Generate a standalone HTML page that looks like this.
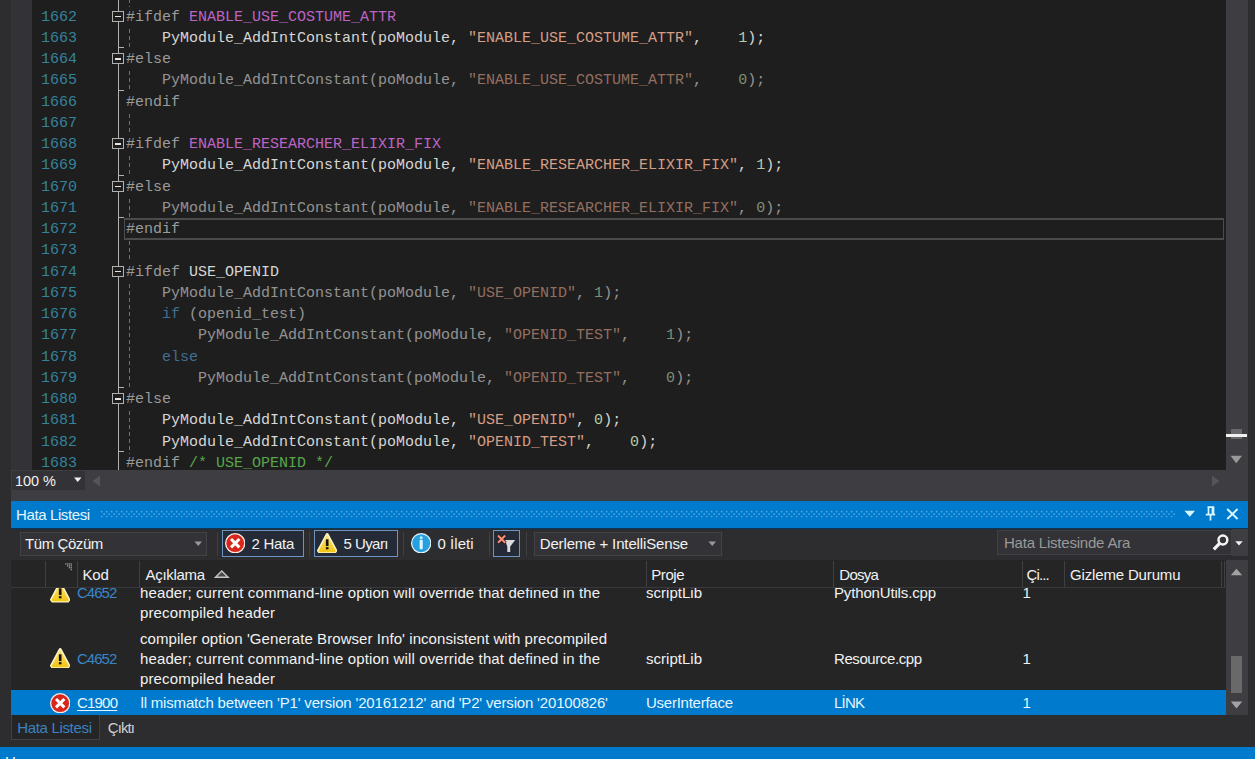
<!DOCTYPE html>
<html><head><meta charset="utf-8"><title>VS</title>
<style>
html,body{margin:0;padding:0;}
body{width:1255px;height:759px;overflow:hidden;background:#2d2d30;position:relative;font-family:"Liberation Sans",sans-serif;}
div,i,span{box-sizing:border-box;}
.a{position:absolute;}
.t{position:absolute;white-space:pre;font-family:"Liberation Sans",sans-serif;}
#editor{left:32px;top:0;width:1194px;height:470px;background:#1e1e1e;}
#margin{left:11px;top:0;width:21px;height:470px;background:#333337;}
.ln,.cl{position:absolute;font-family:"Liberation Mono",monospace;font-size:15px;line-height:21.25px;height:21.25px;white-space:pre;}
.ln{left:41px;color:#34839c;}
.cl{color:#d6d6d6;}
.pp{color:#9b9b9b;}.mac{color:#bd63c5;}.str{color:#d69d85;}.num{color:#b5cea8;}.kw{color:#569cd6;}.cm{color:#57a64a;}
.dim{opacity:.63;}
.box{position:absolute;left:112px;width:11.5px;height:11px;border:1px solid #b0b0b0;background:#1e1e1e;}
.box i{position:absolute;left:1.7px;top:3.7px;width:6px;height:1.5px;background:#e4e4e4;}
.vl{position:absolute;width:1.3px;background:#b2b2b2;}
.hk{position:absolute;left:118px;height:1.2px;width:5.7px;background:#b2b2b2;}
.dl{position:absolute;left:129px;width:1px;background:repeating-linear-gradient(to bottom,#707070 0,#707070 4.25px,transparent 4.25px,transparent 7.0833px);}
</style></head><body>

<div class="a" id="margin"></div>
<div class="a" id="editor"></div>
<div class="vl" style="left:118px;top:0;height:470px"></div>
<div class="ln" style="top:-14.675px">1661</div>
<div class="dl" style="top:-14.675px;height:21.25px"></div>
<div class="a" style="left:123.9px;top:218.17px;width:1100.4px;height:21.6px;border:solid #4b4b4b;border-width:2.4px 1.8px;background:#1e1e1e"></div>
<div class="ln" style="top:6.575px">1662</div>
<div class="box" style="top:10.88px"><i></i></div>
<div class="cl" style="left:126px;top:6.575px"><span class="pp">#ifdef </span><span class="mac">ENABLE_USE_COSTUME_ATTR</span></div>
<div class="ln" style="top:27.825px">1663</div>
<div class="dl" style="top:28.725px;height:21.25px"></div>
<div class="hk" style="top:47.12px"></div>
<div class="cl" style="left:162px;top:27.825px"><span class="id">PyModule_AddIntConstant(poModule, </span><span class="str">&quot;ENABLE_USE_COSTUME_ATTR&quot;</span><span class="id">,    </span><span class="num">1</span><span class="id">);</span></div>
<div class="ln" style="top:49.075px">1664</div>
<div class="box" style="top:53.38px"><i></i></div>
<div class="cl" style="left:126px;top:49.075px"><span class="pp">#else</span></div>
<div class="ln" style="top:70.325px">1665</div>
<div class="dl" style="top:71.225px;height:21.25px"></div>
<div class="hk" style="top:89.62px"></div>
<div class="cl dim" style="left:162px;top:70.325px"><span class="id">PyModule_AddIntConstant(poModule, </span><span class="str">&quot;ENABLE_USE_COSTUME_ATTR&quot;</span><span class="id">,    </span><span class="num">0</span><span class="id">);</span></div>
<div class="ln" style="top:91.575px">1666</div>
<div class="cl" style="left:126px;top:91.575px"><span class="pp">#endif</span></div>
<div class="ln" style="top:112.825px">1667</div>
<div class="dl" style="top:113.725px;height:21.25px"></div>
<div class="ln" style="top:134.075px">1668</div>
<div class="box" style="top:138.38px"><i></i></div>
<div class="cl" style="left:126px;top:134.075px"><span class="pp">#ifdef </span><span class="mac">ENABLE_RESEARCHER_ELIXIR_FIX</span></div>
<div class="ln" style="top:155.325px">1669</div>
<div class="dl" style="top:156.225px;height:21.25px"></div>
<div class="hk" style="top:174.62px"></div>
<div class="cl" style="left:162px;top:155.325px"><span class="id">PyModule_AddIntConstant(poModule, </span><span class="str">&quot;ENABLE_RESEARCHER_ELIXIR_FIX&quot;</span><span class="id">, </span><span class="num">1</span><span class="id">);</span></div>
<div class="ln" style="top:176.575px">1670</div>
<div class="box" style="top:180.88px"><i></i></div>
<div class="cl" style="left:126px;top:176.575px"><span class="pp">#else</span></div>
<div class="ln" style="top:197.825px">1671</div>
<div class="dl" style="top:198.725px;height:21.25px"></div>
<div class="hk" style="top:217.12px"></div>
<div class="cl dim" style="left:162px;top:197.825px"><span class="id">PyModule_AddIntConstant(poModule, </span><span class="str">&quot;ENABLE_RESEARCHER_ELIXIR_FIX&quot;</span><span class="id">, </span><span class="num">0</span><span class="id">);</span></div>
<div class="ln" style="top:219.075px">1672</div>
<div class="cl" style="left:126px;top:219.075px"><span class="pp">#endif</span></div>
<div class="ln" style="top:240.325px">1673</div>
<div class="dl" style="top:241.225px;height:21.25px"></div>
<div class="ln" style="top:261.575px">1674</div>
<div class="box" style="top:265.88px"><i></i></div>
<div class="cl" style="left:126px;top:261.575px"><span class="pp">#ifdef </span><span class="id">USE_OPENID</span></div>
<div class="ln" style="top:282.825px">1675</div>
<div class="dl" style="top:283.725px;height:21.25px"></div>
<div class="cl dim" style="left:162px;top:282.825px"><span class="id">PyModule_AddIntConstant(poModule, </span><span class="str">&quot;USE_OPENID&quot;</span><span class="id">, </span><span class="num">1</span><span class="id">);</span></div>
<div class="ln" style="top:304.075px">1676</div>
<div class="dl" style="top:304.975px;height:21.25px"></div>
<div class="cl dim" style="left:162px;top:304.075px"><span class="kw">if</span><span class="id"> (openid_test)</span></div>
<div class="ln" style="top:325.325px">1677</div>
<div class="dl" style="top:326.225px;height:21.25px"></div>
<div class="cl dim" style="left:198px;top:325.325px"><span class="id">PyModule_AddIntConstant(poModule, </span><span class="str">&quot;OPENID_TEST&quot;</span><span class="id">,    </span><span class="num">1</span><span class="id">);</span></div>
<div class="ln" style="top:346.575px">1678</div>
<div class="dl" style="top:347.475px;height:21.25px"></div>
<div class="cl dim" style="left:162px;top:346.575px"><span class="kw">else</span></div>
<div class="ln" style="top:367.825px">1679</div>
<div class="dl" style="top:368.725px;height:21.25px"></div>
<div class="hk" style="top:387.12px"></div>
<div class="cl dim" style="left:198px;top:367.825px"><span class="id">PyModule_AddIntConstant(poModule, </span><span class="str">&quot;OPENID_TEST&quot;</span><span class="id">,    </span><span class="num">0</span><span class="id">);</span></div>
<div class="ln" style="top:389.075px">1680</div>
<div class="box" style="top:393.38px"><i></i></div>
<div class="cl" style="left:126px;top:389.075px"><span class="pp">#else</span></div>
<div class="ln" style="top:410.325px">1681</div>
<div class="dl" style="top:411.225px;height:21.25px"></div>
<div class="cl" style="left:162px;top:410.325px"><span class="id">PyModule_AddIntConstant(poModule, </span><span class="str">&quot;USE_OPENID&quot;</span><span class="id">, </span><span class="num">0</span><span class="id">);</span></div>
<div class="ln" style="top:431.575px">1682</div>
<div class="dl" style="top:432.475px;height:21.25px"></div>
<div class="hk" style="top:450.88px"></div>
<div class="cl" style="left:162px;top:431.575px"><span class="id">PyModule_AddIntConstant(poModule, </span><span class="str">&quot;OPENID_TEST&quot;</span><span class="id">,    </span><span class="num">0</span><span class="id">);</span></div>
<div class="ln" style="top:452.825px">1683</div>
<div class="cl" style="left:126px;top:452.825px"><span class="pp">#endif </span><span class="cm">/* USE_OPENID */</span></div>
<div class="a" style="left:1226px;top:0;width:22px;height:470px;background:#3e3e42"></div>
<div class="a" style="left:1231px;top:429px;width:11px;height:10px;background:#686868"></div>
<div class="a" style="left:1226px;top:434px;width:21px;height:3px;background:#f0f0f0"></div>
<svg class="a" style="left:1230px;top:455px" width="13" height="9" viewBox="0 0 13 9"><path d="M0.5 0.8h11.5l-5.75 7.4z" fill="#999"/></svg>
<div class="a" style="left:11px;top:470px;width:1237px;height:31px;background:#3e3e42"></div>
<div class="a" style="left:12px;top:471px;width:73px;height:19px;background:#333337"></div>
<div class="t" style="left:15.00px;top:470.50px;font-size:14.50px;letter-spacing:-0.029px;color:#f1f1f1;line-height:20px;">100 %</div>
<svg class="a" style="left:73px;top:477px" width="10" height="6" viewBox="0 0 10 6"><path d="M1 0.5h7.5l-3.75 4.5z" fill="#f1f1f1"/></svg>
<svg class="a" style="left:92px;top:475px" width="9" height="12" viewBox="0 0 9 12"><path d="M8 0.5v11l-7.5-5.5z" fill="#555558"/></svg>
<svg class="a" style="left:1211px;top:475px" width="9" height="12" viewBox="0 0 9 12"><path d="M1 0.5v11l7.5-5.5z" fill="#555558"/></svg>
<div class="a" style="left:11px;top:501px;width:1237px;height:27px;background:#007acc"></div>
<svg class="a" style="left:100px;top:510px" width="1075" height="9"><defs><pattern id="dp" width="5" height="5" patternUnits="userSpaceOnUse"><rect x="0.9" y="0.9" width="1.500" height="1.500" fill="#56aae6"/><rect x="3.400" y="3.400" width="1.500" height="1.500" fill="#56aae6"/></pattern></defs><rect width="1075" height="7.4" fill="url(#dp)"/></svg>
<div class="t" style="left:16.00px;top:504.50px;font-size:15.00px;letter-spacing:-0.379px;color:#e4f6ff;line-height:20px;">Hata Listesi</div>
<svg class="a" style="left:1184px;top:510px" width="12" height="8" viewBox="0 0 12 8"><path d="M0.5 0.8h10.5l-5.25 6z" fill="#d8f6ff"/></svg>
<svg class="a" style="left:1205px;top:506px" width="11" height="16" viewBox="0 0 11 16"><path d="M2.5 1.2h6v7M3.5 1.2v7M0.8 8.6h9.4M5.5 8.6v6" stroke="#d8f6ff" stroke-width="1.7" fill="none"/><rect x="6.6" y="1.2" width="1.9" height="7" fill="#d8f6ff"/></svg>
<svg class="a" style="left:1226px;top:508px" width="13" height="12" viewBox="0 0 13 12"><path d="M1.2 1l10.4 10M11.6 1L1.2 11" stroke="#d8f6ff" stroke-width="1.9" fill="none"/></svg>
<div class="a" style="left:11px;top:528px;width:1237px;height:32px;background:#2d2d30"></div>
<div class="a" style="left:11px;top:528px;width:1237px;height:2px;background:linear-gradient(#0b3a5e,#26292e)"></div>
<div class="a" style="left:20px;top:532px;width:187px;height:24px;background:#333337;border:1px solid #434346"></div>
<div class="t" style="left:25.00px;top:533.50px;font-size:15.00px;letter-spacing:-0.423px;color:#f1f1f1;line-height:20px;">Tüm Çözüm</div>
<svg class="a" style="left:194px;top:541px" width="9" height="6" viewBox="0 0 9 6"><path d="M0.5 0.5h7.5l-3.75 4.5z" fill="#999"/></svg>
<div class="a" style="left:217.0px;top:532px;width:1px;height:24px;background:#3f3f46"></div>
<div class="a" style="left:222px;top:530px;width:82px;height:27px;background:#242b37;border:1px solid #6d93c0"></div>
<svg class="a" style="left:224.8px;top:532.8px" width="20.4" height="20.4" viewBox="0 0 20 20"><circle cx="10" cy="10" r="10" fill="#fbe9e6"/><circle cx="10" cy="10" r="8.700" fill="#d9261a"/><path d="M5.900 5.900l8.200 8.200M14.100 5.900l-8.200 8.200" stroke="#fff" stroke-width="2.900" fill="none"/></svg>
<div class="t" style="left:251.60px;top:533.50px;font-size:15.00px;letter-spacing:-0.299px;color:#f1f1f1;line-height:20px;">2 Hata</div>
<div class="a" style="left:309.0px;top:532px;width:1px;height:24px;background:#3f3f46"></div>
<div class="a" style="left:314px;top:530px;width:84px;height:27px;background:#242b37;border:1px solid #6d93c0"></div>
<svg class="a" style="left:316.9px;top:532.8px" width="20.4" height="20.4" viewBox="0 0 20 20"><defs><linearGradient id="wg" x1="0" y1="0" x2="0" y2="1"><stop offset="0" stop-color="#f9e27a"/><stop offset="1" stop-color="#f3c613"/></linearGradient></defs><path d="M10 0c0.600 0 1.100 0.300 1.400 0.900l8.400 15.800c0.300 0.500 0.200 1 -0.100 1.400l-1.100 1.400c-0.300 0.400-0.600 0.500-1.100 0.500H2.500c-0.500 0-0.800-0.100-1.100-0.500l-1.100-1.400c-0.300-0.400-0.400-0.900-0.100-1.400L8.600 0.900c0.300-0.600 0.800-0.900 1.400-0.900z" fill="#fcf3c0"/><path d="M10 1.900l8.500 15.700l-0.900 1.200H2.400l-0.900-1.200z" fill="url(#wg)"/><rect x="8.700" y="6.200" width="2.600" height="6.600" fill="#1a1208"/><rect x="8.700" y="13.900" width="2.600" height="2.100" fill="#1a1208"/></svg>
<div class="t" style="left:343.50px;top:533.50px;font-size:15.00px;letter-spacing:-0.558px;color:#f1f1f1;line-height:20px;">5 Uyarı</div>
<div class="a" style="left:403.0px;top:532px;width:1px;height:24px;background:#3f3f46"></div>
<svg class="a" style="left:410.8px;top:532.8px" width="20.4" height="20.4" viewBox="0 0 20 20"><circle cx="10" cy="10" r="10" fill="#e6f5fc"/><circle cx="10" cy="10" r="8.800" fill="#27a0df"/><rect x="8.500" y="6.600" width="3" height="9.400" rx="0.800" fill="#dff6ff"/><rect x="8.600" y="3.500" width="2.800" height="2.200" rx="0.900" fill="#dff6ff"/></svg>
<div class="t" style="left:437.40px;top:533.50px;font-size:15.00px;letter-spacing:0.058px;color:#f1f1f1;line-height:20px;">0 İleti</div>
<div class="a" style="left:488.5px;top:532px;width:1px;height:24px;background:#3f3f46"></div>
<div class="a" style="left:493px;top:530px;width:27px;height:27px;background:#242b37;border:1px solid #6d93c0"></div>
<svg class="a" style="left:496px;top:533px" width="21" height="21" viewBox="0 0 21 21"><path d="M9 7h10.200l-5 6.500v5.500h-2.900v-5.500z" fill="#dcdcdc"/><path d="M1.800 2.300l7.600 7.600M9.400 2.300l-7.600 7.600" stroke="#2a1510" stroke-width="3.600" fill="none"/><path d="M2 2.500l7.200 7.200M9.200 2.500l-7.200 7.200" stroke="#f4907b" stroke-width="2.100" fill="none"/></svg>
<div class="a" style="left:525.5px;top:532px;width:1px;height:24px;background:#3f3f46"></div>
<div class="a" style="left:534px;top:532px;width:188px;height:24px;background:#333337;border:1px solid #434346"></div>
<div class="t" style="left:539.70px;top:533.50px;font-size:15.00px;letter-spacing:-0.135px;color:#f1f1f1;line-height:20px;">Derleme + IntelliSense</div>
<svg class="a" style="left:708px;top:541px" width="9" height="6" viewBox="0 0 9 6"><path d="M0.500 0.500h7.500l-3.750 4.500z" fill="#999"/></svg>
<div class="a" style="left:1232px;top:529px;width:16px;height:27px;background:#3e3e42"></div>
<div class="a" style="left:997px;top:530px;width:235px;height:25px;background:#333337;border:1px solid #3f3f46"></div>
<div class="t" style="left:1004.00px;top:533.00px;font-size:15.00px;letter-spacing:-0.210px;color:#999999;line-height:20px;">Hata Listesinde Ara</div>
<svg class="a" style="left:1212px;top:534px" width="17" height="17" viewBox="0 0 17 17"><circle cx="10.900" cy="6" r="4.400" stroke="#f4f4f4" stroke-width="2.500" fill="none"/><path d="M7.900 9.200l-6.100 6.100" stroke="#f4f4f4" stroke-width="3.300" fill="none"/></svg>
<svg class="a" style="left:1235px;top:541px" width="8" height="5" viewBox="0 0 8 5"><path d="M0.300 0.300h7.400l-3.700 4.200z" fill="#f1f1f1"/></svg>
<div class="a" style="left:11px;top:560px;width:1215px;height:155.4px;background:#252526"></div>
<div class="a" style="left:44.5px;top:561px;width:1px;height:26px;background:#3f3f46"></div>
<div class="a" style="left:77.0px;top:561px;width:1px;height:26px;background:#3f3f46"></div>
<div class="a" style="left:139.3px;top:561px;width:1px;height:26px;background:#3f3f46"></div>
<div class="a" style="left:645.5px;top:561px;width:1px;height:26px;background:#3f3f46"></div>
<div class="a" style="left:833.2px;top:561px;width:1px;height:26px;background:#3f3f46"></div>
<div class="a" style="left:1021.6px;top:561px;width:1px;height:26px;background:#3f3f46"></div>
<div class="a" style="left:1064.2px;top:561px;width:1px;height:26px;background:#3f3f46"></div>
<div class="a" style="left:1220.6px;top:561px;width:1px;height:26px;background:#3f3f46"></div>
<div class="a" style="left:1223.6px;top:561px;width:1px;height:26px;background:#3f3f46"></div>
<div class="a" style="left:11px;top:587px;width:1215px;height:1px;background:#39393d"></div>
<div class="t" style="left:82.50px;top:564.50px;font-size:15.00px;letter-spacing:-0.195px;color:#f1f1f1;line-height:20px;">Kod</div>
<div class="t" style="left:145.50px;top:564.50px;font-size:15.00px;letter-spacing:-0.312px;color:#f1f1f1;line-height:20px;">Açıklama</div>
<svg class="a" style="left:214px;top:569px" width="16" height="10" viewBox="0 0 16 10"><path d="M1.500 8.300l6.300-6.300l6.300 6.300z" stroke="#c4c4c4" stroke-width="1.400" fill="#4a4a4a"/></svg>
<div class="t" style="left:651.30px;top:564.50px;font-size:15.00px;letter-spacing:-0.454px;color:#f1f1f1;line-height:20px;">Proje</div>
<div class="t" style="left:839.30px;top:564.50px;font-size:15.00px;letter-spacing:-0.754px;color:#f1f1f1;line-height:20px;">Dosya</div>
<div class="t" style="left:1026.60px;top:564.50px;font-size:15.00px;letter-spacing:-0.892px;color:#f1f1f1;line-height:20px;">Çi...</div>
<div class="t" style="left:1070.00px;top:564.50px;font-size:15.00px;letter-spacing:-0.156px;color:#f1f1f1;line-height:20px;">Gizleme Durumu</div>
<svg class="a" style="left:65px;top:563px" width="8" height="9" viewBox="0 0 8 9" fill="#9a9a9a"><rect x="0.2" y="0.3" width="1.300" height="1.300"/><rect x="2.0" y="0.3" width="1.300" height="1.300"/><rect x="3.8" y="0.3" width="1.300" height="1.300"/><rect x="5.6" y="0.3" width="1.300" height="1.300"/><rect x="2.0" y="2.2" width="1.300" height="1.300"/><rect x="3.8" y="2.2" width="1.300" height="1.300"/><rect x="5.6" y="2.2" width="1.300" height="1.300"/><rect x="3.8" y="4.1" width="1.300" height="1.300"/><rect x="5.6" y="4.1" width="1.300" height="1.300"/><rect x="5.6" y="6.0" width="1.300" height="1.300"/></svg>
<div class="a" style="left:11px;top:588px;width:1215px;height:127.4px;overflow:hidden">
<div class="t" style="left:129.00px;top:-24.50px;font-size:15.00px;letter-spacing:0.064px;color:#f1f1f1;line-height:20px;">compiler option 'Generate Browser Info' inconsistent with precompiled</div>
<div class="t" style="left:129.00px;top:-4.70px;font-size:15.00px;letter-spacing:0.119px;color:#f1f1f1;line-height:20px;">header; current command-line option will override that defined in the</div>
<div class="t" style="left:129.00px;top:15.00px;font-size:15.00px;letter-spacing:0.142px;color:#f1f1f1;line-height:20px;">precompiled header</div>
<svg class="a" style="left:38.9px;top:-5.6px" width="20.4" height="20.4" viewBox="0 0 20 20"><defs><linearGradient id="wg" x1="0" y1="0" x2="0" y2="1"><stop offset="0" stop-color="#f9e27a"/><stop offset="1" stop-color="#f3c613"/></linearGradient></defs><path d="M10 0c0.600 0 1.100 0.300 1.400 0.900l8.400 15.800c0.300 0.500 0.200 1 -0.100 1.400l-1.100 1.400c-0.300 0.400-0.600 0.500-1.100 0.500H2.500c-0.500 0-0.800-0.100-1.100-0.500l-1.100-1.400c-0.300-0.400-0.400-0.900-0.100-1.400L8.600 0.900c0.300-0.600 0.800-0.900 1.400-0.900z" fill="#fcf3c0"/><path d="M10 1.900l8.500 15.700l-0.900 1.200H2.400l-0.900-1.200z" fill="url(#wg)"/><rect x="8.700" y="6.200" width="2.600" height="6.600" fill="#1a1208"/><rect x="8.700" y="13.900" width="2.600" height="2.100" fill="#1a1208"/></svg>
<div class="t" style="left:66.00px;top:-4.70px;font-size:15.00px;letter-spacing:-0.975px;color:#3a86c8;line-height:20px;">C4652</div>
<div class="t" style="left:635.00px;top:-4.70px;font-size:15.00px;letter-spacing:0.018px;color:#f1f1f1;line-height:20px;">scriptLib</div>
<div class="t" style="left:823.00px;top:-4.70px;font-size:15.00px;letter-spacing:-0.158px;color:#f1f1f1;line-height:20px;">PythonUtils.cpp</div>
<div class="t" style="left:1011.50px;top:-4.70px;font-size:15.00px;letter-spacing:0.000px;color:#f1f1f1;line-height:20px;">1</div>
<div class="t" style="left:129.00px;top:41.20px;font-size:15.00px;letter-spacing:0.064px;color:#f1f1f1;line-height:20px;">compiler option 'Generate Browser Info' inconsistent with precompiled</div>
<div class="t" style="left:129.00px;top:61.00px;font-size:15.00px;letter-spacing:0.119px;color:#f1f1f1;line-height:20px;">header; current command-line option will override that defined in the</div>
<div class="t" style="left:129.00px;top:80.70px;font-size:15.00px;letter-spacing:0.142px;color:#f1f1f1;line-height:20px;">precompiled header</div>
<svg class="a" style="left:38.9px;top:60.1px" width="20.4" height="20.4" viewBox="0 0 20 20"><defs><linearGradient id="wg" x1="0" y1="0" x2="0" y2="1"><stop offset="0" stop-color="#f9e27a"/><stop offset="1" stop-color="#f3c613"/></linearGradient></defs><path d="M10 0c0.600 0 1.100 0.300 1.400 0.900l8.400 15.800c0.300 0.500 0.200 1 -0.100 1.400l-1.100 1.400c-0.300 0.400-0.600 0.500-1.100 0.500H2.500c-0.500 0-0.800-0.100-1.100-0.500l-1.100-1.400c-0.300-0.400-0.400-0.900-0.100-1.400L8.600 0.900c0.300-0.600 0.800-0.900 1.400-0.900z" fill="#fcf3c0"/><path d="M10 1.900l8.500 15.700l-0.900 1.200H2.400l-0.900-1.200z" fill="url(#wg)"/><rect x="8.700" y="6.200" width="2.600" height="6.600" fill="#1a1208"/><rect x="8.700" y="13.900" width="2.600" height="2.100" fill="#1a1208"/></svg>
<div class="t" style="left:66.00px;top:61.00px;font-size:15.00px;letter-spacing:-0.975px;color:#3a86c8;line-height:20px;">C4652</div>
<div class="t" style="left:635.00px;top:61.00px;font-size:15.00px;letter-spacing:0.018px;color:#f1f1f1;line-height:20px;">scriptLib</div>
<div class="t" style="left:823.00px;top:61.00px;font-size:15.00px;letter-spacing:-0.414px;color:#f1f1f1;line-height:20px;">Resource.cpp</div>
<div class="t" style="left:1011.50px;top:61.00px;font-size:15.00px;letter-spacing:0.000px;color:#f1f1f1;line-height:20px;">1</div>
<div class="a" style="left:0;top:102px;width:1215px;height:25.4px;background:#007acc"></div>
<svg class="a" style="left:39.0px;top:104.8px" width="20.4" height="20.4" viewBox="0 0 20 20"><circle cx="10" cy="10" r="10" fill="#fbe9e6"/><circle cx="10" cy="10" r="8.700" fill="#d9261a"/><path d="M5.900 5.900l8.200 8.200M14.100 5.900l-8.200 8.200" stroke="#fff" stroke-width="2.900" fill="none"/></svg>
<div class="t" style="left:66.00px;top:105.00px;font-size:15.00px;letter-spacing:-0.800px;color:#e4f6ff;line-height:20px;text-decoration:underline;text-underline-offset:2px;">C1900</div>
<div class="t" style="left:129.50px;top:105.00px;font-size:15.00px;letter-spacing:-0.177px;color:#e4f6ff;line-height:20px;">ll mismatch between 'P1' version '20161212' and 'P2' version '20100826'</div>
<div class="t" style="left:635.00px;top:105.00px;font-size:15.00px;letter-spacing:-0.253px;color:#e4f6ff;line-height:20px;">UserInterface</div>
<div class="t" style="left:823.00px;top:105.00px;font-size:15.00px;letter-spacing:-0.782px;color:#e4f6ff;line-height:20px;">LİNK</div>
<div class="t" style="left:1011.50px;top:105.00px;font-size:15.00px;letter-spacing:0.000px;color:#e4f6ff;line-height:20px;">1</div>
</div>
<div class="a" style="left:1226px;top:560px;width:22px;height:155.4px;background:#3e3e42"></div>
<svg class="a" style="left:1230px;top:568px" width="13" height="8" viewBox="0 0 13 8"><path d="M0.800 7.300h11.400l-5.700-6.600z" fill="#a2a2a2"/></svg>
<svg class="a" style="left:1230px;top:700.6px" width="13" height="8" viewBox="0 0 13 8"><path d="M0.800 0.400h11.400l-5.700 7z" fill="#a2a2a2"/></svg>
<div class="a" style="left:1231px;top:656.3px;width:11px;height:37.2px;background:#696969"></div>
<div class="a" style="left:11px;top:715px;width:89px;height:25px;background:#252526;border:1px solid #3f3f46;border-top:none"></div>
<div class="t" style="left:17.20px;top:717.50px;font-size:15.00px;letter-spacing:-0.324px;color:#3a82c0;line-height:20px;">Hata Listesi</div>
<div class="t" style="left:107.70px;top:717.50px;font-size:15.00px;letter-spacing:-0.884px;color:#d0d0d0;line-height:20px;">Çıktı</div>
<div class="a" style="left:0;top:746.6px;width:1255px;height:12.4px;background:#007acc"></div>
<div class="t" style="left:5.00px;top:752.20px;font-size:15.00px;letter-spacing:-0.459px;color:#ffffff;line-height:20px;">Hazır</div>
</body></html>
